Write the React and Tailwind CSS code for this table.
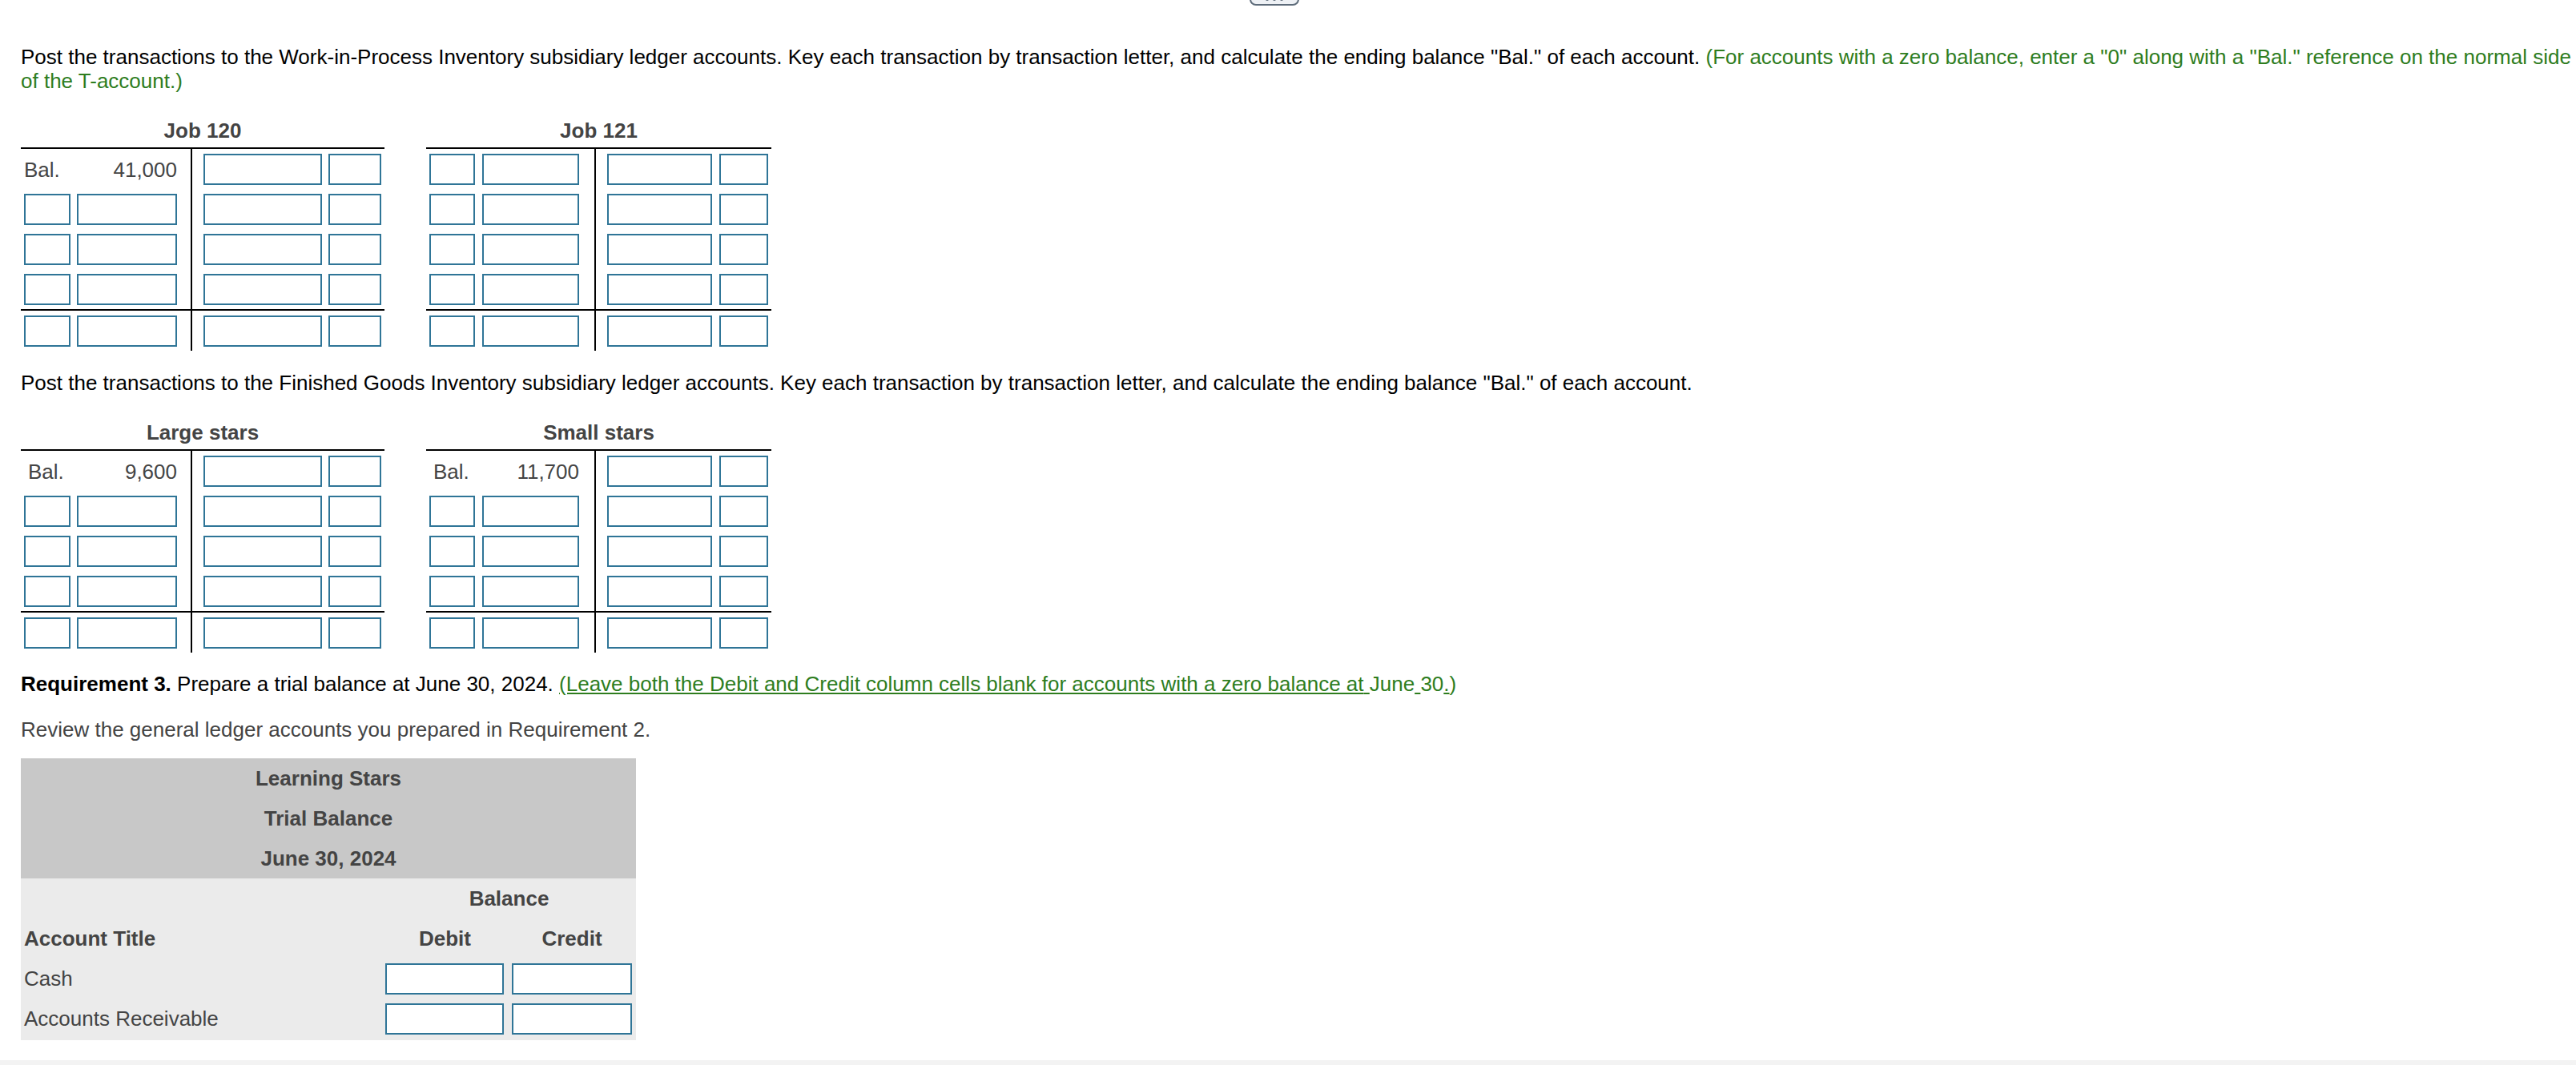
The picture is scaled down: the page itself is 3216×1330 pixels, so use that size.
import React from "react";

const green = "text-[#2e7d1e]";

function Box({ className }) {
  return (
    <div
      className={`h-[39px] shrink-0 border-2 border-[#2f7597] bg-white ${className}`}
    />
  );
}

// one T-account: 4 rows above the total line, 1 row below
function TAccount({
  title,
  bal,
  balCls,
  leftCls,
  rightCls,
  gapCls,
  smCls,
  lgCls,
  rlgCls,
  rsmCls,
}) {
  const leftRow = (i) =>
    i === 0 && bal ? (
      <div key={i} className={`flex h-[50px] pt-[6px] ${gapCls}`}>
        <div className={`flex h-[39px] shrink-0 items-center ${smCls} ${balCls}`}>
          Bal.
        </div>
        <div className={`flex h-[39px] shrink-0 items-center justify-end ${lgCls}`}>
          {bal}
        </div>
      </div>
    ) : (
      <div key={i} className={`flex h-[50px] pt-[6px] ${gapCls}`}>
        <Box className={smCls} />
        <Box className={lgCls} />
      </div>
    );

  const rightRow = (i) => (
    <div key={i} className={`flex h-[50px] pt-[6px] ${gapCls}`}>
      <Box className={rlgCls} />
      <Box className={rsmCls} />
    </div>
  );

  return (
    <div className="flex flex-col text-[#444]">
      <div className="text-center font-bold">{title}</div>
      <div className="mt-[6px] border-t-2 border-black">
        <div className="flex">
          <div className={`border-r-2 border-black ${leftCls}`}>
            {[0, 1, 2, 3].map(leftRow)}
          </div>
          <div className={rightCls}>{[0, 1, 2, 3].map(rightRow)}</div>
        </div>
        <div className="flex border-t-2 border-black">
          <div className={`border-r-2 border-black ${leftCls}`}>
            {leftRow(9)}
          </div>
          <div className={rightCls}>{rightRow(9)}</div>
        </div>
      </div>
    </div>
  );
}

// column sizes of the two T-account shapes on the page
const wide = {
  leftCls: "w-[214px] pl-[4px]",
  rightCls: "w-[240px] pl-[14px]",
  gapCls: "gap-[8px]",
  smCls: "w-[58px]",
  lgCls: "w-[125px]",
  rlgCls: "w-[148px]",
  rsmCls: "w-[66px]",
};

const narrow = {
  leftCls: "w-[212px] pl-[4px]",
  rightCls: "w-[219px] pl-[14px]",
  gapCls: "gap-[9px]",
  smCls: "w-[57px]",
  lgCls: "w-[121px]",
  rlgCls: "w-[131px]",
  rsmCls: "w-[61px]",
};

function TrialBalance() {
  return (
    <div className="w-[768px] text-[#444]">
      <div className="bg-[#c8c8c8] text-center font-bold">
        <div className="flex h-[50px] items-center justify-center">Learning Stars</div>
        <div className="flex h-[50px] items-center justify-center">Trial Balance</div>
        <div className="flex h-[50px] items-center justify-center">June 30, 2024</div>
      </div>
      <div className="grid grid-cols-[451px_157px_160px] bg-[#ebebeb] pb-[2px]">
        <div className="h-[50px]" />
        <div className="col-span-2 flex h-[50px] items-center justify-center font-bold">
          Balance
        </div>

        <div className="flex h-[50px] items-center pl-[4px] font-bold">Account Title</div>
        <div className="flex h-[50px] items-center justify-center font-bold">Debit</div>
        <div className="flex h-[50px] items-center justify-center font-bold">Credit</div>

        {["Cash", "Accounts Receivable"].map((name) => (
          <React.Fragment key={name}>
            <div className="flex h-[50px] items-center pl-[4px]">{name}</div>
            <div className="h-[50px] pl-[4px] pt-[6px]">
              <Box className="w-[148px]" />
            </div>
            <div className="h-[50px] pl-[5px] pt-[6px]">
              <Box className="w-[150px]" />
            </div>
          </React.Fragment>
        ))}
      </div>
    </div>
  );
}

export default function App() {
  return (
    <div className="flex h-[1330px] flex-col overflow-hidden bg-white font-['Liberation_Sans',Arial,sans-serif] text-[26px] leading-[30px] text-black">
      {/* cut-off "more" button at the top */}
      <div className="flex h-[7px] items-end overflow-hidden pl-[1560px]">
        <div className="flex h-[30px] w-[62px] shrink-0 items-end justify-center gap-[5px] rounded-[8px] border-2 border-[#5d6b7a] bg-[#eef1f5] pb-[4px]">
          <span className="h-[4px] w-[4px] rounded-full bg-[#5d6b7a]" />
          <span className="h-[4px] w-[4px] rounded-full bg-[#5d6b7a]" />
          <span className="h-[4px] w-[4px] rounded-full bg-[#5d6b7a]" />
        </div>
      </div>

      <div className="pl-[26px] pt-[49px]">
        <p>
          Post the transactions to the Work-in-Process Inventory subsidiary ledger
          accounts. Key each transaction by transaction letter, and calculate the
          ending balance "Bal." of each account.{" "}
          <span className={green}>
            (For accounts with a zero balance, enter a "0" along with a "Bal."
            reference on the normal side of the T-account.)
          </span>
        </p>

        <div className="mt-[32px] flex gap-[52px]">
          <TAccount title="Job 120" bal="41,000" balCls="pl-0" {...wide} />
          <TAccount title="Job 121" {...narrow} />
        </div>

        <p className="mt-[25px]">
          Post the transactions to the Finished Goods Inventory subsidiary ledger
          accounts. Key each transaction by transaction letter, and calculate the
          ending balance "Bal." of each account.
        </p>

        <div className="mt-[32px] flex gap-[52px]">
          <TAccount title="Large stars" bal="9,600" balCls="pl-[5px]" {...wide} />
          <TAccount title="Small stars" bal="11,700" balCls="pl-[5px]" {...narrow} />
        </div>

        <p className="mt-[24px]">
          <span className="font-bold">Requirement 3.</span> Prepare a trial balance
          at June 30, 2024.{" "}
          <span className={green}>
            <span className="underline">
              (Leave both the Debit and Credit column cells blank for accounts with a
              zero balance at{" "}
            </span>
            June<span className="underline"> </span>30
            <span className="underline">.</span>)
          </span>
        </p>

        <p className="mt-[27px] text-[#444]">
          Review the general ledger accounts you prepared in Requirement 2.
        </p>

        <div className="mt-[21px]">
          <TrialBalance />
        </div>
      </div>

      <div className="mt-auto h-[6px] bg-[#f3f3f3]" />
    </div>
  );
}
